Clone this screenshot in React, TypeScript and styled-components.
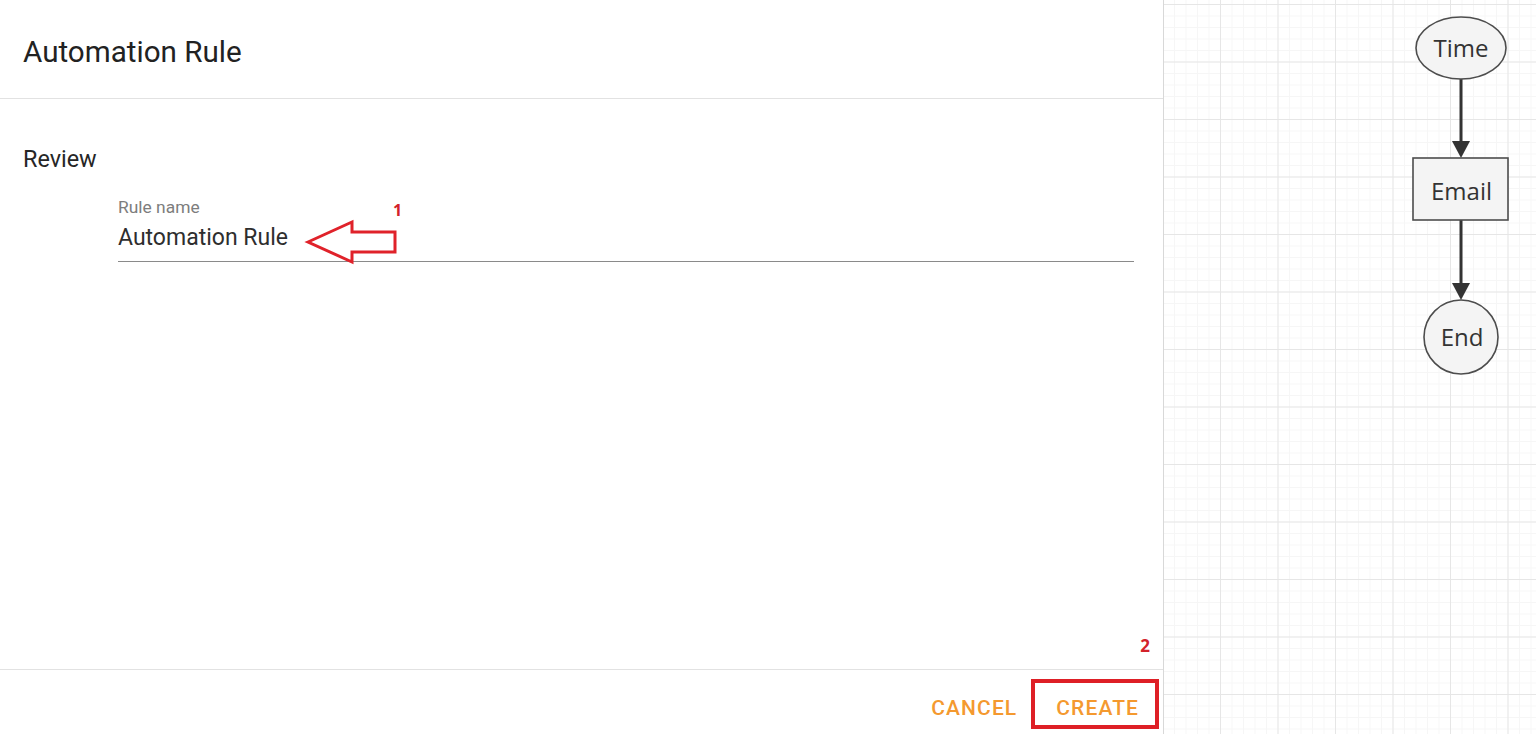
import React from "react";
import styled, { createGlobalStyle } from "styled-components";

const GlobalStyle = createGlobalStyle`
  html, body {
    margin: 0;
    padding: 0;
    background: #ffffff;
    overflow: hidden;
  }
  body {
    font-family: Roboto, "Liberation Sans", Arial, sans-serif;
  }
  * { box-sizing: border-box; }
`;

const Page = styled.div`
  display: flex;
  width: 1536px;
  height: 734px;
`;

const FormPanel = styled.section`
  width: 1163px;
  flex: none;
  display: flex;
  flex-direction: column;
  background: #ffffff;
`;

const Header = styled.header`
  height: 99px;
  flex: none;
  display: flex;
  align-items: center;
  padding: 5px 23px 0;
  border-bottom: 1px solid #e2e2e2;
`;

const Title = styled.h1`
  margin: 0;
  font-size: 29.6px;
  font-weight: 400;
  color: #222222;
  letter-spacing: 0;
`;

const Body = styled.div`
  flex: 1;
  padding: 44px 29px 0 23px;
  display: flex;
  flex-direction: column;
`;

const SectionTitle = styled.h2`
  margin: 0;
  font-size: 23.4px;
  line-height: 32px;
  font-weight: 400;
  color: #262626;
`;

const Field = styled.div`
  position: relative;
  margin: 22px 0 0 95px;
  display: flex;
  flex-direction: column;
  border-bottom: 1px solid #8a8a8a;
  padding-bottom: 7px;
`;

const FieldLabel = styled.label`
  font-size: 17.4px;
  line-height: 20px;
  color: #7d7d7d;
`;

const FieldValue = styled.div`
  margin-top: 5px;
  font-size: 23px;
  line-height: 32px;
  color: #2e2e2e;
`;

const Marker = styled.span<{ $left: number; $top: number }>`
  position: absolute;
  left: ${(p) => p.$left}px;
  top: ${(p) => p.$top}px;
  font-family: "Open Sans", "DejaVu Sans", sans-serif;
  font-weight: 700;
  font-size: 16px;
  line-height: 18px;
  color: #d3222b;
`;

const CalloutArrow = styled.svg`
  position: absolute;
  left: 188px;
  top: 23px;
  overflow: visible;
`;

const Footer = styled.footer`
  height: 65px;
  flex: none;
  border-top: 1px solid #e2e2e2;
  display: flex;
  justify-content: flex-end;
  align-items: center;
  gap: 15px;
  padding: 12px 12px 0 0;
`;

const ActionButton = styled.button`
  border: none;
  background: transparent;
  padding: 0 12px;
  font-family: Roboto, "Liberation Sans", Arial, sans-serif;
  font-size: 21px;
  line-height: 26px;
  font-weight: 500;
  letter-spacing: 1.1px;
  text-transform: uppercase;
  color: #f4992f;
  cursor: pointer;
`;

const Highlighted = styled.div`
  position: relative;
  display: flex;
`;

const Frame = styled.span`
  position: absolute;
  left: -13px;
  right: -8px;
  top: -16px;
  bottom: -8px;
  border: 4px solid #de1f26;
  pointer-events: none;
`;

const Badge = styled.span`
  position: absolute;
  right: 1px;
  top: -59px;
  font-family: "Open Sans", "DejaVu Sans", sans-serif;
  font-weight: 700;
  font-size: 17px;
  line-height: 20px;
  color: #d3222b;
`;

const Canvas = styled.aside`
  position: relative;
  flex: 1;
  border-left: 1px solid #d8d8d8;
  background-color: #ffffff;
  background-image:
    linear-gradient(to right, #e6e6e6 1px, transparent 1px),
    linear-gradient(to bottom, #e6e6e6 1px, transparent 1px),
    linear-gradient(to right, #f6f6f6 1px, transparent 1px),
    linear-gradient(to bottom, #f6f6f6 1px, transparent 1px);
  background-size: 57.5px 57.5px, 57.5px 57.5px, 11.5px 11.5px, 11.5px 11.5px;
  background-position: 56px 4px, 56px 4px, 10px 4px, 10px 4px;
`;

const FlowChart = styled.svg`
  position: absolute;
  left: 0;
  top: 0;
  width: 100%;
  height: 100%;
`;

const NodeLabel = styled.text`
  font-family: "Open Sans", "Noto Sans", sans-serif;
  font-size: 24px;
  fill: #333333;
`;

type Node =
  | { kind: "ellipse"; label: string; cx: number; cy: number; rx: number; ry: number }
  | { kind: "rect"; label: string; x: number; y: number; w: number; h: number }
  | { kind: "circle"; label: string; cx: number; cy: number; r: number };

const nodes: Node[] = [
  { kind: "ellipse", label: "Time", cx: 297, cy: 48, rx: 45, ry: 31 },
  { kind: "rect", label: "Email", x: 249, y: 158, w: 95, h: 62 },
  { kind: "circle", label: "End", cx: 297, cy: 337, r: 37 },
];

const edges = [
  { x: 297, y1: 79, y2: 158 },
  { x: 297, y1: 220, y2: 300 },
];

function NodeShape({ node }: { node: Node }) {
  const common = { fill: "#f4f4f4", stroke: "#4d4d4d", strokeWidth: 1.6 };
  if (node.kind === "ellipse") {
    return (
      <g>
        <ellipse cx={node.cx} cy={node.cy} rx={node.rx} ry={node.ry} {...common} />
        <NodeLabel x={node.cx} y={node.cy - 1} textAnchor="middle" dominantBaseline="central">
          {node.label}
        </NodeLabel>
      </g>
    );
  }
  if (node.kind === "rect") {
    return (
      <g>
        <rect x={node.x} y={node.y} width={node.w} height={node.h} {...common} />
        <NodeLabel
          x={node.x + node.w / 2 + 1}
          y={node.y + node.h / 2 + 1}
          textAnchor="middle"
          dominantBaseline="central"
        >
          {node.label}
        </NodeLabel>
      </g>
    );
  }
  return (
    <g>
      <circle cx={node.cx} cy={node.cy} r={node.r} {...common} />
      <NodeLabel x={node.cx + 1} y={node.cy - 1} textAnchor="middle" dominantBaseline="central">
        {node.label}
      </NodeLabel>
    </g>
  );
}

export default function App() {
  return (
    <>
      <GlobalStyle />
      <Page>
        <FormPanel>
          <Header>
            <Title>Automation Rule</Title>
          </Header>
          <Body>
            <SectionTitle>Review</SectionTitle>
            <Field>
              <FieldLabel>Rule name</FieldLabel>
              <FieldValue>Automation Rule</FieldValue>
              <Marker $left={275} $top={4}>1</Marker>
              <CalloutArrow width="92" height="44" viewBox="0 0 92 44">
                <polygon
                  points="2,22 46,2 46,12 89,12 89,32 46,32 46,42"
                  fill="none"
                  stroke="#e0222a"
                  strokeWidth="3"
                  strokeLinejoin="miter"
                />
              </CalloutArrow>
            </Field>
          </Body>
          <Footer>
            <ActionButton>Cancel</ActionButton>
            <Highlighted>
              <ActionButton>Create</ActionButton>
              <Frame />
              <Badge>2</Badge>
            </Highlighted>
          </Footer>
        </FormPanel>
        <Canvas>
          <FlowChart>
            {edges.map((e, i) => (
              <g key={i}>
                <line x1={e.x} y1={e.y1} x2={e.x} y2={e.y2 - 16} stroke="#333333" strokeWidth="3" />
                <polygon
                  points={`${e.x - 9},${e.y2 - 17} ${e.x + 9},${e.y2 - 17} ${e.x},${e.y2}`}
                  fill="#333333"
                />
              </g>
            ))}
            {nodes.map((n) => (
              <NodeShape key={n.label} node={n} />
            ))}
          </FlowChart>
        </Canvas>
      </Page>
    </>
  );
}
